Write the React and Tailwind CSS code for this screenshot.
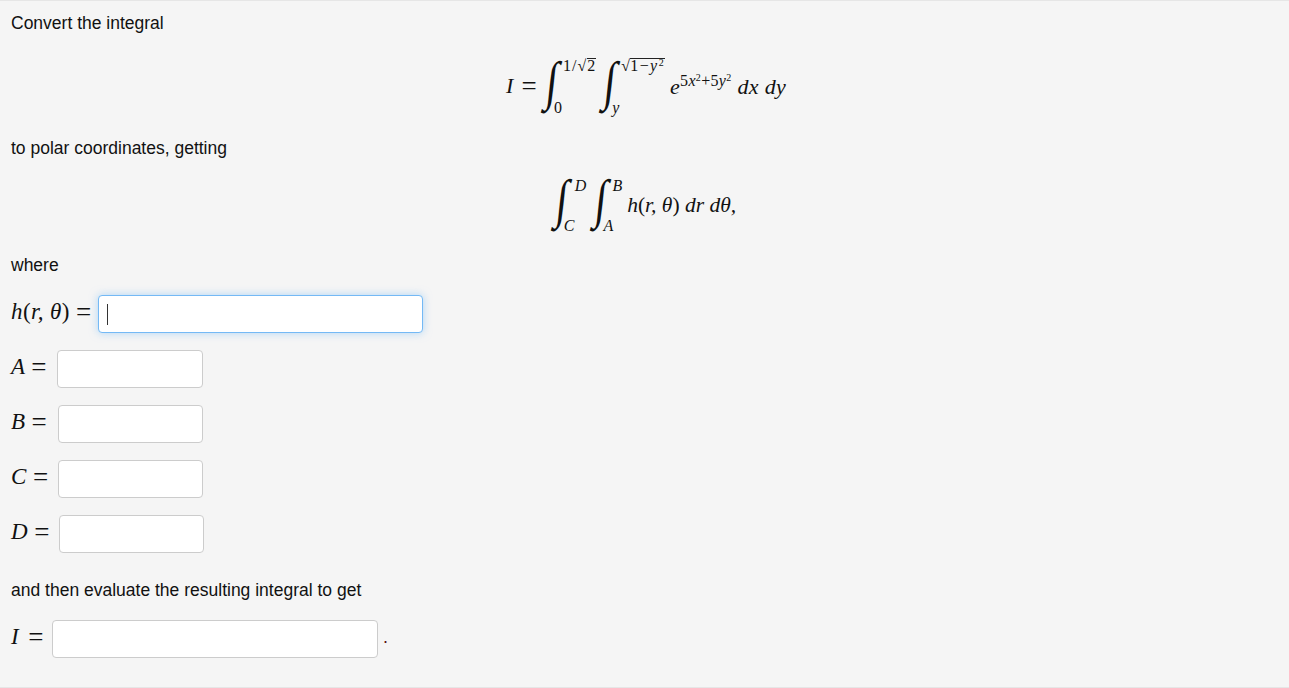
import React from "react";

const mathFont = "font-['Liberation_Serif','DejaVu_Serif',serif]";

const Equals = () => (
  <span className="not-italic inline-block text-[27px] leading-none align-[-2px] font-light">=</span>
);

// definite integral: sign with limits on its right, lower limit tucked under the hook
const Integral = ({ upper, lower, className = "" }) => (
  <span className={`inline-flex items-center ${className}`}>
    <span className="font-['Noto_Sans'] font-light italic text-[42px] leading-[60px] h-[60px] w-[19px] flex items-center justify-center -translate-y-[8px] scale-y-[1.28] -skew-x-[8deg] tracking-normal">∫</span>
    <span className="flex flex-col justify-between text-[16px] leading-[18px] h-[60px]">
      <span className="ml-[1px]">{upper}</span>
      <span className="-ml-[8px]">{lower}</span>
    </span>
  </span>
);

const Sqrt = ({ children }) => (
  <span className="inline-flex items-baseline not-italic">
    <span className="text-[16px] leading-none">√</span>
    <span className="border-t border-[#222] leading-[14px]">{children}</span>
  </span>
);

const Answer = ({ label, width, focused, suffix }) => (
  <div className="flex items-center h-[38px]">
    <span className={`${mathFont} italic text-[23px] tracking-[0.4px] -mt-[4px] text-[#111] whitespace-nowrap ${label.pad}`}>
      {label.text} <Equals />
    </span>
    <div
      className={`h-[38px] ${width} rounded-[4px] bg-white flex items-center pl-[8px] ${
        focused
          ? "border border-[#74b9f5] shadow-[0_0_8px_rgba(116,185,245,0.55)]"
          : "border border-[#cccccc]"
      }`}
    >
      {focused && <span className="w-px h-[21px] bg-[#333]" />}
    </div>
    {suffix && <span className="ml-[5px] -mt-[5px] text-[18px] text-[#5a1010]">{suffix}</span>}
  </div>
);

export default function App() {
  return (
    <div className="h-[688px] bg-[#f5f5f5] border-y border-[#e6e6e6] px-[11px] pt-[10px] font-['Liberation_Sans',Arial,sans-serif] text-[17.5px] leading-[24px] text-[#111]">
      <p>Convert the integral</p>

      <div className={`${mathFont} italic text-[22px] tracking-[0.3px] flex justify-center items-center h-[77px] mt-[13px] ml-[3px] text-[#111]`}>
        <span className="mr-[6px]"><span className="mr-[2px]">I</span> <Equals /></span>
        <Integral
          upper={<span className="not-italic tracking-[1px]">1/<Sqrt>2</Sqrt></span>}
          lower={<span className="not-italic">0</span>}
          className="mr-[5px]"
        />
        <Integral
          upper={<Sqrt><span className="tracking-[1.4px]">1−<i>y</i><sup className="text-[10px]">2</sup></span></Sqrt>}
          lower="y"
          className="mr-[5px]"
        />
        <span>e</span>
        <span className="text-[16px] -mt-[12px] mr-[6px]">
          <span className="not-italic">5</span>x<sup className="text-[10px] not-italic">2</sup>
          <span className="not-italic">+5</span>y<sup className="text-[10px] not-italic">2</sup>
        </span>
        <span>dx dy</span>
      </div>

      <p className="mt-[11px]">to polar coordinates, getting</p>

      <div className={`${mathFont} italic text-[21.5px] flex justify-center items-center h-[70px] mt-[10px] text-[#111]`}>
        <Integral upper={<span className="block mt-[2px] ml-[2px]">D</span>} lower="C" className="mr-[6px]" />
        <Integral upper={<span className="block mt-[2px]">B</span>} lower="A" className="mr-[5px]" />
        <span>h<span className="not-italic">(</span>r, θ<span className="not-italic">)</span> dr dθ,</span>
      </div>

      <p className="mt-[13px]">where</p>

      <div className="mt-[18px] flex flex-col gap-[17px]">
        <Answer label={{ text: <>h<span className="not-italic">(</span>r, θ<span className="not-italic">)</span></>, pad: "w-[87px]" }} width="w-[325px]" focused />
        <Answer label={{ text: "A", pad: "w-[46px]" }} width="w-[146px]" />
        <Answer label={{ text: "B", pad: "w-[47px]" }} width="w-[145px]" />
        <Answer label={{ text: "C", pad: "w-[47px]" }} width="w-[145px]" />
        <Answer label={{ text: "D", pad: "w-[48px]" }} width="w-[145px]" />
      </div>

      <p className="mt-[25px]">and then evaluate the resulting integral to get</p>

      <div className="mt-[18px]">
        <Answer label={{ text: <span className="mr-[3px]">I</span>, pad: "w-[41px]" }} width="w-[326px]" suffix="." />
      </div>
    </div>
  );
}
